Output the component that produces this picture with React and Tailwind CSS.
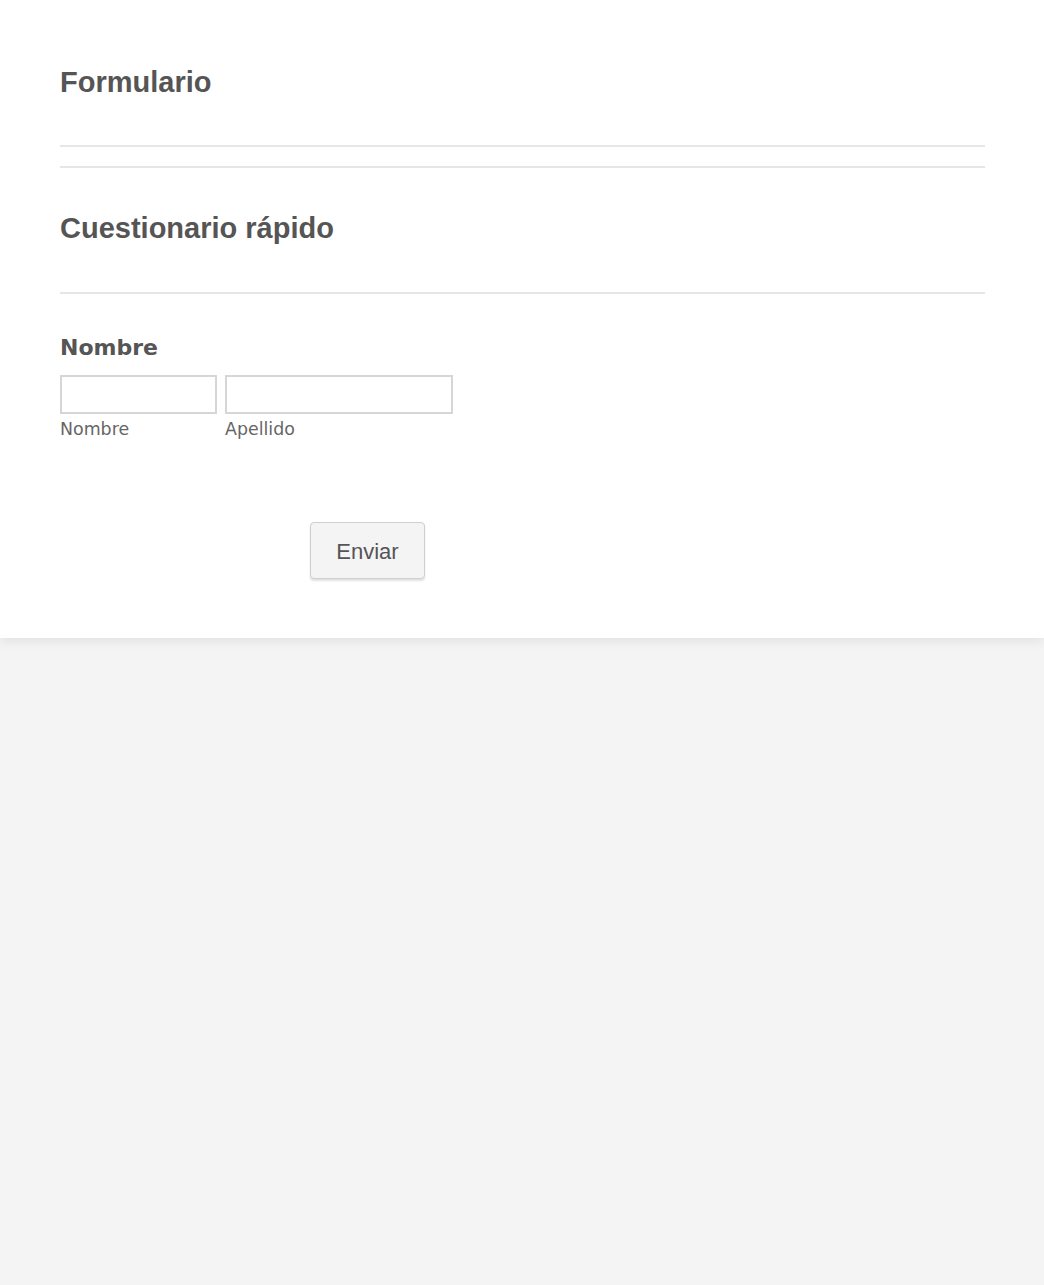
import React from "react";

export default function App() {
  return (
    <div className="min-h-screen bg-[#f4f4f4]" style={{ fontFamily: "Arial, 'Liberation Sans', sans-serif" }}>
      <div className="bg-white pl-[60px] pr-[59px] pt-[65px] pb-[59px] shadow-[0_4px_10px_rgba(0,0,0,0.07)]">
        {/* Title */}
        <h1 className="text-[29px] leading-[35px] font-bold text-[#555] mb-[45px] font-['Liberation_Sans',Arial,sans-serif]">
          Formulario
        </h1>
        <div className="h-[2px] bg-[#e6e6e6]" />
        <div className="h-[2px] bg-[#e6e6e6] mt-[19px]" />

        {/* Section header */}
        <h2 className="text-[29px] leading-[35px] font-bold text-[#555] mt-[43px] mb-[46px] font-['Liberation_Sans',Arial,sans-serif]">
          Cuestionario rápido
        </h2>
        <div className="h-[2px] bg-[#e6e6e6]" />

        {/* Name field */}
        <div className="mt-[41px] font-['DejaVu_Sans',Verdana,sans-serif]">
          <label className="block text-[22px] leading-[26px] font-bold text-[#555]">Nombre</label>
          <div className="flex gap-[8px] mt-[14px]">
            <div className="flex flex-col">
              <input type="text" className="w-[157px] h-[39px] border-2 border-[#d6d6d6] bg-white outline-none" />
              <span className="mt-[5px] text-[17.4px] leading-[21px] text-[#666]">Nombre</span>
            </div>
            <div className="flex flex-col">
              <input type="text" className="w-[228px] h-[39px] border-2 border-[#d6d6d6] bg-white outline-none" />
              <span className="mt-[5px] text-[17.4px] leading-[21px] text-[#666]">Apellido</span>
            </div>
          </div>
        </div>

        {/* Submit */}
        <div className="mt-[82px] pl-[250px]">
          <button className="w-[115px] h-[57px] bg-[#f4f4f4] border border-[#cfcfcf] rounded-[4px] shadow-[0_2px_2px_rgba(0,0,0,0.12)] pt-[2px] text-[22px] text-[#555] font-['Liberation_Sans',Arial,sans-serif]">
            Enviar
          </button>
        </div>
      </div>
    </div>
  );
}
